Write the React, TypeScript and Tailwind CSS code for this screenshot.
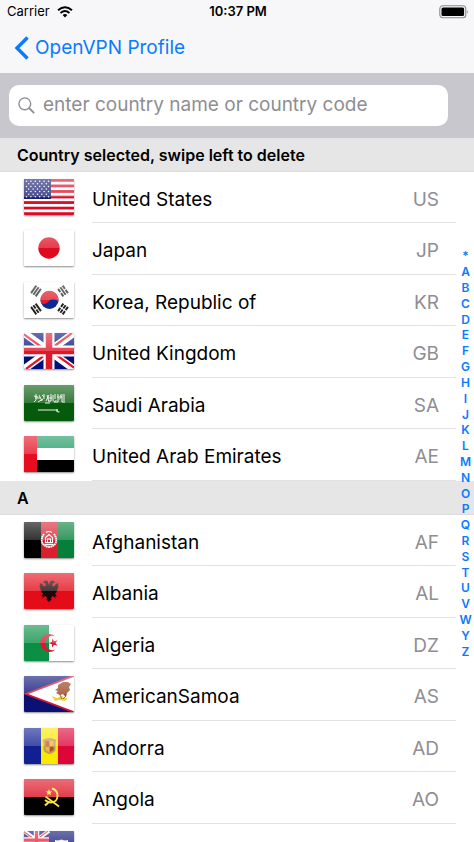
import { useState } from 'react';
import type { ReactNode } from 'react';

type Country = { name: string; code: string };

const selected: Country[] = [
  { name: 'United States', code: 'US' },
  { name: 'Japan', code: 'JP' },
  { name: 'Korea, Republic of', code: 'KR' },
  { name: 'United Kingdom', code: 'GB' },
  { name: 'Saudi Arabia', code: 'SA' },
  { name: 'United Arab Emirates', code: 'AE' },
];

const countriesA: Country[] = [
  { name: 'Afghanistan', code: 'AF' },
  { name: 'Albania', code: 'AL' },
  { name: 'Algeria', code: 'DZ' },
  { name: 'AmericanSamoa', code: 'AS' },
  { name: 'Andorra', code: 'AD' },
  { name: 'Angola', code: 'AO' },
  { name: 'Anguilla', code: 'AI' },
];

const sections = [
  { id: 'selected', title: 'Country selected, swipe left to delete', items: selected },
  { id: 'A', title: 'A', items: countriesA },
];

const indexLetters = '*ABCDEFGHIJKLMNOPQRSTUVWYZ'.split('');

function UnionJack() {
  return (
    <>
      <path d="M0 0H50V36H0Z" fill="#00107a" />
      <path d="M0 0L50 36M50 0L0 36" stroke="#fff" strokeWidth="7.5" />
      <path d="M0 1.5L23 18M27 18L50 34.5M48 0L25 17M25 19L2 36" stroke="#e0162b" strokeWidth="2.2" />
      <path d="M25 0V36M0 18H50" stroke="#fff" strokeWidth="11" />
      <path d="M25 0V36M0 18H50" stroke="#e0162b" strokeWidth="6.5" />
    </>
  );
}

// one trigram of the Korean flag, centred on its own origin
function Trigram({ x, y, angle, gaps }: { x: number; y: number; angle: number; gaps: number[] }) {
  return (
    <g transform={`translate(${x} ${y}) rotate(${angle})`} stroke="#222" strokeWidth="1.9">
      {[-2.8, 0, 2.8].map((offset, i) => (
        <path
          key={offset}
          d={gaps.includes(i) ? `M-4.6 ${offset}H-.6M.6 ${offset}H4.6` : `M-4.6 ${offset}H4.6`}
        />
      ))}
    </g>
  );
}

const flags: Record<string, ReactNode> = {
  US: (
    <>
      <path d="M0 0H50V36H0Z" fill="#fff" />
      {[0, 2, 4, 6, 8, 10, 12].map((i) => (
        <rect key={i} y={i * 2.77} width="50" height="2.77" fill="#dc0a24" />
      ))}
      <path d="M0 0H27V20H0Z" fill="#1c2173" />
      {[0, 1, 2, 3, 4, 5, 6].map((row) =>
        [0, 1, 2, 3, 4, 5].slice(row % 2).map((col) => (
          <circle
            key={`${row}-${col}`}
            cx={2.5 + col * 4.4 - (row % 2) * 2.2}
            cy={2.2 + row * 2.6}
            r=".75"
            fill="#fff"
          />
        )),
      )}
    </>
  ),
  JP: (
    <>
      <path d="M0 0H50V36H0Z" fill="#fff" />
      <circle cx="25" cy="18" r="10.7" fill="#e00a1e" />
    </>
  ),
  KR: (
    <>
      <path d="M0 0H50V36H0Z" fill="#fff" />
      <circle cx="25.5" cy="18" r="9" fill="#0b2a94" />
      <path d="M16.9 20.5A9 9 0 1 1 34.1 20.5C32.500 16.500 28 16 25.500 18.500C23 22 18.500 23 16.900 20.500Z" fill="#e0202c" />
      <Trigram x={12} y={9} angle={-55} gaps={[]} />
      <Trigram x={39} y={9} angle={55} gaps={[0, 2]} />
      <Trigram x={12} y={27} angle={55} gaps={[1]} />
      <Trigram x={39} y={27} angle={-55} gaps={[0, 1, 2]} />
    </>
  ),
  GB: <UnionJack />,
  SA: (
    <>
      <path d="M0 0H50V36H0Z" fill="#055a0b" />
      <path
        d="M10 11l4 1M12 9v6l-2 2M15 10l3 6M14 17l5-3M18 10l2 2M20 9v5M22 16l3-6M23 10l2 7M21 18h5M27 9v7h-2M29 10v5c0 2 3 2 3 0M31 9v5M34 9v8h-4M36 10c2 0 1 4-1 4M38 9v8h3M40 9v7M11 13h5M33 12h5M24 13h4"
        fill="none"
        stroke="#e8f2e8"
        strokeWidth="1"
      />
      <path d="M14 25H34M33 24v2.5l2.5.5" fill="none" stroke="#e8f2e8" strokeWidth="1.1" />
    </>
  ),
  AE: (
    <>
      <path d="M0 0H50V12H0Z" fill="#189760" />
      <path d="M0 12H50V24H0Z" fill="#fff" />
      <path d="M0 24H50V36H0Z" fill="#000" />
      <path d="M0 0H13V36H0Z" fill="#e60d20" />
    </>
  ),
  AF: (
    <>
      <path d="M0 0H17V36H0Z" fill="#000" />
      <path d="M17 0H34V36H17Z" fill="#d8202e" />
      <path d="M34 0H50V36H34Z" fill="#04803a" />
      <g fill="none" stroke="#fff">
        <path d="M20 12C15.5 18 18 24.5 25 25C32 24.5 34.5 18 30 12" strokeWidth="1.8" strokeDasharray="1.6 .5" />
        <path d="M21.5 20.5V15.5L25 12.5L28.5 15.5V20.5ZM23.5 20V17H26.5V20M22 10.5Q25 8.5 28 10.5" strokeWidth="1.1" />
        <path d="M20.5 22.5H29.5" strokeWidth="1.3" />
      </g>
    </>
  ),
  AL: (
    <>
      <path d="M0 0H50V36H0Z" fill="#e30c18" />
      <path
        d="M25 12L23.5 8L21 7.5L18.5 9.5L21 10L22 12.5L20 13.5L18 11L15.5 10L16.5 12.5H15L16.5 14.5H15.5L17 16.5H16L18 18.5H16.5L19 20.5L17 23.5L19 23L18.5 25.5L21 23L23 24.5L22.5 26.5L25 29L27.5 26.5L27 24.5L29 23L31.5 25.5L31 23L33 23.5L31 20.5L33.5 18.5H32L34 16.5H33L34.5 14.5H33.5L35 12.5H33.5L34.5 10L32 11L30 13.5L28 12.5L29 10L31.5 9.5L29 7.5L26.5 8Z"
        fill="#1d0709"
      />
    </>
  ),
  DZ: (
    <>
      <path d="M0 0H25V36H0Z" fill="#0b8f45" />
      <path d="M25 0H50V36H25Z" fill="#fff" />
      <path d="M31.5 11.5A9 9 0 1 0 31.5 24.5A7.2 7.2 0 1 1 31.5 11.5Z" fill="#e01530" />
      <path d="M24.5 18L28 16.8L28 13.5L30.2 16.2L33.5 15.3L31.5 18L33.5 20.8L30.2 19.8L28 22.5L28 19.2Z" fill="#e01530" />
    </>
  ),
  AS: (
    <>
      <path d="M0 0H50V36H0Z" fill="#0b1173" />
      <path d="M52 -1V37L2 18Z" fill="#fff" stroke="#d01635" strokeWidth="1.8" />
      <path d="M34 9L39 6L44 6L47 8L45 11L46 14L43 17L42 21L39 18L36 19L32 17L34 15L31 14L34 12Z" fill="#9b4323" />
      <path d="M28 20L33 22L38 20L40 22L44 22L41 25L35 24L31 25Z" fill="#f0cf3c" />
      <path d="M36 19L38 23M42 20L39 23" stroke="#9b6a27" strokeWidth="1" />
    </>
  ),
  AD: (
    <>
      <path d="M0 0H17V36H0Z" fill="#101f92" />
      <path d="M17 0H34V36H17Z" fill="#fbe900" />
      <path d="M34 0H50V36H34Z" fill="#dc0639" />
      <path d="M18.5 12Q25.5 8 32.500 12L31.500 15V22Q30 25 25.500 26Q21 25 19.500 22V15Z" fill="#c29a52" />
      <path d="M21.5 13H25V18H21.5Z" fill="#d8552d" />
      <path d="M26 13H29.5V18H26Z" fill="#e8b84a" />
      <path d="M21.5 19H25V24L21.5 22Z" fill="#e8b84a" />
      <path d="M26 19H29.5V22L26 24Z" fill="#b5502f" />
    </>
  ),
  AO: (
    <>
      <path d="M0 0H50V18H0Z" fill="#dc0d1e" />
      <path d="M0 18H50V36H0Z" fill="#000" />
      <path d="M28 9.5C36 12 35 23.500 27 23.500Q24 23.500 21 21" fill="none" stroke="#fde53a" strokeWidth="1.9" />
      <path d="M21.5 17.5L35 27.5" stroke="#fde53a" strokeWidth="1.8" />
      <path d="M25.5 22.5L21 26.5" stroke="#fde53a" strokeWidth="2.2" />
      <path d="M25 10L25.9 12.3L28.3 12.4L26.4 14L27 16.3L25 15L23 16.3L23.6 14L21.7 12.4L24.1 12.3Z" fill="#fde53a" />
    </>
  ),
  AI: (
    <>
      <path d="M0 0H50V36H0Z" fill="#0b1173" />
      <g transform="scale(.5)">
        <UnionJack />
      </g>
      <path d="M31 9Q33.5 10 37.5 8.5Q41.5 10 44 9V18Q43 24 37.5 26Q32 24 31 18Z" fill="#fff" />
      <path d="M33 12L37 14M42 12L38 15" stroke="#e8862a" strokeWidth="1.8" />
    </>
  ),
};

function Flag({ code }: { code: string }) {
  return (
    <span className="relative mb-0.5 block h-9 w-[50px] shrink-0 overflow-hidden rounded-[1px] shadow-[0_1px_2px_rgba(0,0,0,0.45)]">
      <svg viewBox="0 0 50 36" className="size-full" aria-hidden="true">
        {flags[code]}
      </svg>
      <span className="absolute inset-x-0 top-0 h-1/2 bg-linear-to-b from-white/40 to-white/20" />
    </span>
  );
}

function StatusBar() {
  return (
    <div className="flex h-6 items-center justify-between pr-[5px] pl-[7px] text-[13px]">
      <div className="flex flex-1 items-center gap-[7px]">
        <span>Carrier</span>
        <svg viewBox="0 0 16 12" className="h-3 w-4" fill="none" stroke="#000" aria-hidden="true">
          <path d="M1 4.3Q8 -1.7 15 4.3" strokeWidth="2" />
          <path d="M3.5 7Q8 3.2 12.5 7" strokeWidth="1.9" />
          <path d="M5.6 9L8 11.5L10.4 9Q8 7 5.6 9Z" fill="#000" stroke="none" />
        </svg>
      </div>
      <span className="font-semibold">10:37 PM</span>
      <div className="flex flex-1 justify-end">
        <svg viewBox="0 0 30 14" className="h-[14px] w-[30px]" aria-hidden="true">
          <rect x=".8" y=".8" width="26" height="12" rx="3" fill="none" stroke="#8b8b8f" strokeWidth="1.1" />
          <rect x="2.5" y="2.5" width="22.6" height="8.6" rx="1.5" fill="#000" />
          <path d="M28.3 5Q30 6.8 28.3 8.8Z" fill="#77777b" />
        </svg>
      </div>
    </div>
  );
}

export default function App() {
  const [query, setQuery] = useState('');

  const matches = (country: Country) =>
    `${country.name} ${country.code}`.toLowerCase().includes(query.trim().toLowerCase());

  return (
    <div className="relative flex h-screen flex-col overflow-hidden bg-white font-['Inter','Liberation_Sans',sans-serif] text-black">
      <header className="h-[73px] shrink-0 bg-[#f7f7f9]">
        <StatusBar />
        <nav className="flex h-12 items-center pl-[14px]">
          <a href="#profile" className="flex items-center gap-[6px] text-[19px] text-[#0a7aff]">
            <svg viewBox="0 0 15 24" className="h-6 w-[15px]" fill="none" stroke="currentColor" strokeWidth="3.4" aria-hidden="true">
              <path d="M13.5 1.5L3 12L13.5 22.5" />
            </svg>
            OpenVPN Profile
          </a>
        </nav>
      </header>

      <div className="h-[65px] shrink-0 bg-[#c8c7cd] pt-3 pr-[26px] pl-[9px]">
        <label className="flex h-[41px] items-center gap-2 rounded-[10px] bg-white pl-[9px]">
          <svg viewBox="0 0 17 17" className="size-[17px] shrink-0" fill="none" stroke="#8e8e93" strokeWidth="1.4" aria-hidden="true">
            <circle cx="6.8" cy="6.8" r="5.9" />
            <path d="M11 11L16.2 16.2" strokeWidth="1.8" />
          </svg>
          <input
            type="text"
            aria-label="Search countries"
            placeholder="enter country name or country code"
            value={query}
            onChange={(e) => setQuery(e.target.value)}
            className="min-w-0 flex-1 bg-transparent text-[19px] placeholder-[#8e8e93] outline-none"
          />
        </label>
      </div>

      <main className="min-h-0 flex-1 overflow-y-auto [scrollbar-width:none]">
        {sections.map((section) => (
          <section key={section.id} id={section.id}>
            <h2 className="flex h-[34px] items-center border-b border-[#dcdcdc] bg-[#e6e6e6] pl-[17px] text-base font-semibold">
              {section.title}
            </h2>
            <ul>
              {section.items.filter(matches).map((country) => (
                <li key={country.code} className="flex h-[51px] items-center pr-[18px] pl-6 even:h-[52px]">
                  <Flag code={country.code} />
                  <div className="ml-[18px] flex h-full flex-1 items-center justify-between border-b border-[#e2e2e4] pt-1 pr-[17px] text-[19px] leading-none">
                    <span>{country.name}</span>
                    <span className="text-[#8e8e93]">{country.code}</span>
                  </div>
                </li>
              ))}
            </ul>
          </section>
        ))}
      </main>

      <nav aria-label="Index" className="absolute top-16 right-0 bottom-0 flex w-[17px] items-center pt-0.5">
        <div className="flex h-[411px] w-full flex-col">
          {indexLetters.map((letter) => (
            <a
              key={letter}
              href={letter === '*' ? '#selected' : `#${letter}`}
              className="flex flex-1 items-center justify-center text-xs leading-none font-semibold text-[#0a7aff]"
            >
              {letter}
            </a>
          ))}
        </div>
      </nav>
    </div>
  );
}
